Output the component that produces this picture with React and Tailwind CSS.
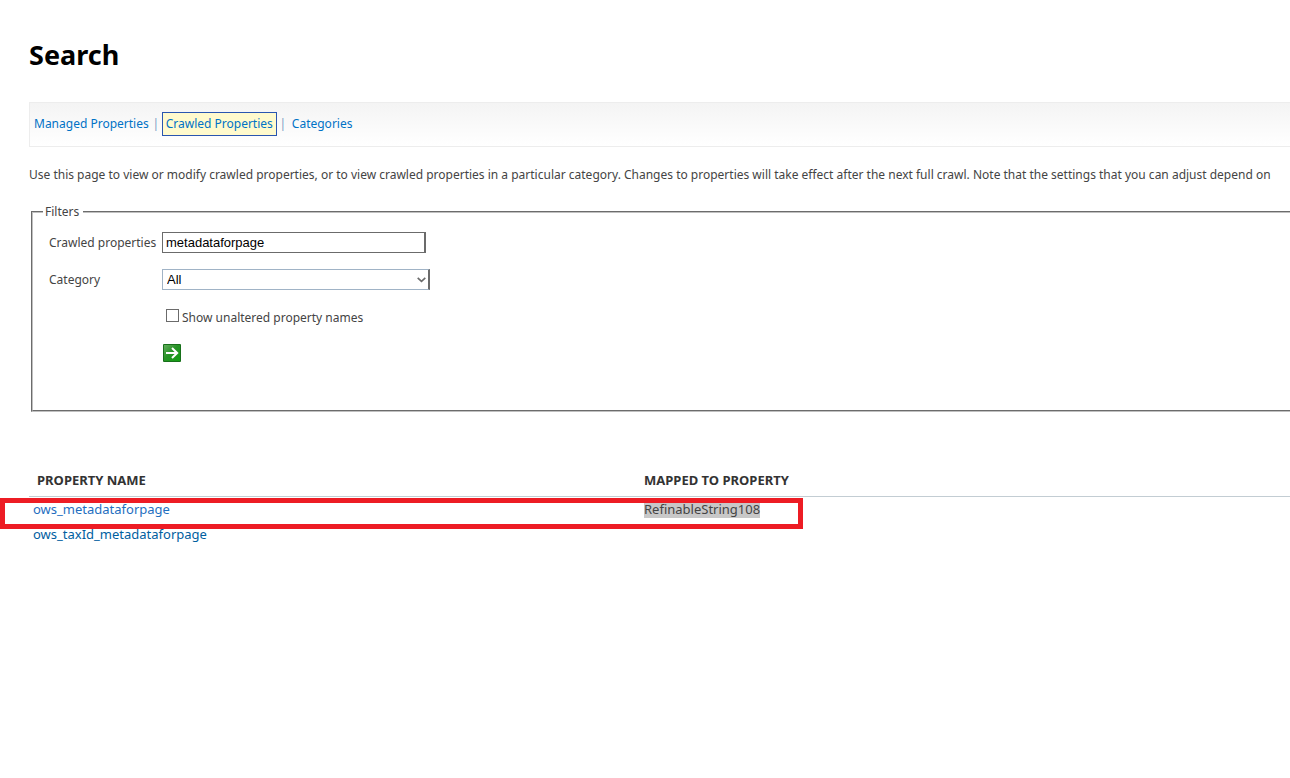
import { useState } from "react";

const tabs = ["Managed Properties", "Crawled Properties", "Categories"];

const properties = [
    { name: "ows_metadataforpage", mapped: "RefinableString108", color: "text-[#1f6fc0]" },
    { name: "ows_taxId_metadataforpage", mapped: "", color: "text-[#00609f]" },
];

function TabBar() {
    return (
        <nav className="mt-7 flex h-[45px] items-center border border-r-0 border-[#ededed] bg-linear-to-b from-[#f4f4f4] to-white pb-0.5 pl-1 text-[#0072c6]">
            {tabs.map((tab, i) => (
                <div key={tab} className="flex items-center">
                    {i > 0 && <span className="w-3 text-center text-[#7d9cc4]">|</span>}
                    <a
                        href="#"
                        className={
                            tab === "Crawled Properties"
                                ? "border border-[#2a56b0] bg-[#fffacd] px-[3px] py-[3px] leading-4"
                                : i > 0 ? "px-[3px]" : "pr-px"
                        }
                    >
                        {tab}
                    </a>
                </div>
            ))}
        </nav>
    );
}

function Filters() {
    const [query, setQuery] = useState("metadataforpage");
    const [unaltered, setUnaltered] = useState(false);

    return (
        <fieldset className="ml-0.5 mt-[21px] border-2 border-r-0 border-[#c0c0c0] pb-12 pl-4 [border-style:groove]">
            <legend className="-ml-1.5 pl-0.5 pr-1 leading-4">Filters</legend>
            <div className="mt-3 flex h-[21px] items-center">
                <label htmlFor="crawled" className="w-[113px]">Crawled properties</label>
                <input
                    id="crawled"
                    type="text"
                    value={query}
                    onChange={(e) => setQuery(e.target.value)}
                    className="h-[21px] w-[264px] border border-r-2 border-[#6b6b6b] bg-white px-[3px] font-['Liberation_Sans',sans-serif] text-[13px] text-black"
                />
            </div>
            <div className="mt-4 flex h-[21px] items-center">
                <label htmlFor="category" className="w-[113px]">Category</label>
                <div className="relative">
                    <select
                        id="category"
                        className="block h-[21px] w-[268px] appearance-none border border-r-2 border-[#a0b3c6] border-r-[#6b6b6b] bg-white pl-1 font-['Liberation_Sans',sans-serif] text-[13px] text-black"
                    >
                        <option>All</option>
                    </select>
                    <svg className="pointer-events-none absolute right-1 top-2 h-[6px] w-[9px]" viewBox="0 0 9 6" fill="none" stroke="#6b6b6b" strokeWidth="1.6">
                        <path d="M0.7 0.8 4.5 4.4 8.3 0.8" />
                    </svg>
                </div>
            </div>
            <label className="ml-[117px] mt-5 flex h-4 items-center gap-[3px]">
                <input
                    type="checkbox"
                    checked={unaltered}
                    onChange={(e) => setUnaltered(e.target.checked)}
                    className="mb-1.5 h-[13px] w-[13px] appearance-none border border-[#6b6b6b] bg-white checked:bg-[#6b6b6b]"
                />
                Show unaltered property names
            </label>
            <button type="button" aria-label="Search" className="ml-[114px] mt-[18px] block h-[18px] w-[18px]">
                <svg viewBox="0 0 18 18" className="block h-[18px] w-[18px]">
                    <defs>
                        <linearGradient id="go" x1="0" y1="0" x2="1" y2="1">
                            <stop offset="0" stopColor="#62ad5c" />
                            <stop offset="0.45" stopColor="#289327" />
                            <stop offset="1" stopColor="#12a011" />
                        </linearGradient>
                    </defs>
                    <rect width="18" height="18" rx="1" fill="#17701a" />
                    <rect x="1" y="1" width="16" height="16" fill="url(#go)" />
                    <path d="M3 9h11M9 4l5.2 5L9 14" fill="none" stroke="#fff" strokeWidth="2" />
                </svg>
            </button>
        </fieldset>
    );
}

function PropertyTable() {
    return (
        <div className="relative mt-[52px]">
            <table className="w-full table-fixed border-collapse text-left text-[13px]">
                <thead>
                    <tr className="h-8 border-b border-[#c3cdd3] text-[#333]">
                        <th className="w-[607px] pl-2 pt-0.5 font-bold">PROPERTY NAME</th>
                        <th className="pl-2 pt-0.5 font-bold">MAPPED TO PROPERTY</th>
                    </tr>
                </thead>
                <tbody>
                    {properties.map((el) => (
                        <tr key={el.name} className="h-[25px]">
                            <td className="pl-1 pt-0.5">
                                <a href="#" className={el.color}>{el.name}</a>
                            </td>
                            <td className="pl-2 pt-0.5">
                                <span className="bg-[#c8c8c8] text-[#444]">{el.mapped}</span>
                            </td>
                        </tr>
                    ))}
                </tbody>
            </table>
            {/* marker around the first result */}
            <div className="pointer-events-none absolute -left-[29px] top-[34px] h-[31px] w-[803px] border-5 border-[#ed1c24]" />
        </div>
    );
}

export default function App() {
    return (
        <main className="min-h-screen overflow-hidden bg-white pl-[29px] pt-9 font-['Noto_Sans',sans-serif] text-xs text-[#444]">
            <h1 className="text-[27px] font-bold leading-[38px] text-black">Search</h1>
            <TabBar />
            <p className="mt-5 whitespace-nowrap leading-4">
                Use this page to view or modify crawled properties, or to view crawled properties in a particular category. Changes to properties will take effect after the next full crawl. Note that the settings that you can adjust depend on
            </p>
            <Filters />
            <PropertyTable />
        </main>
    );
}
